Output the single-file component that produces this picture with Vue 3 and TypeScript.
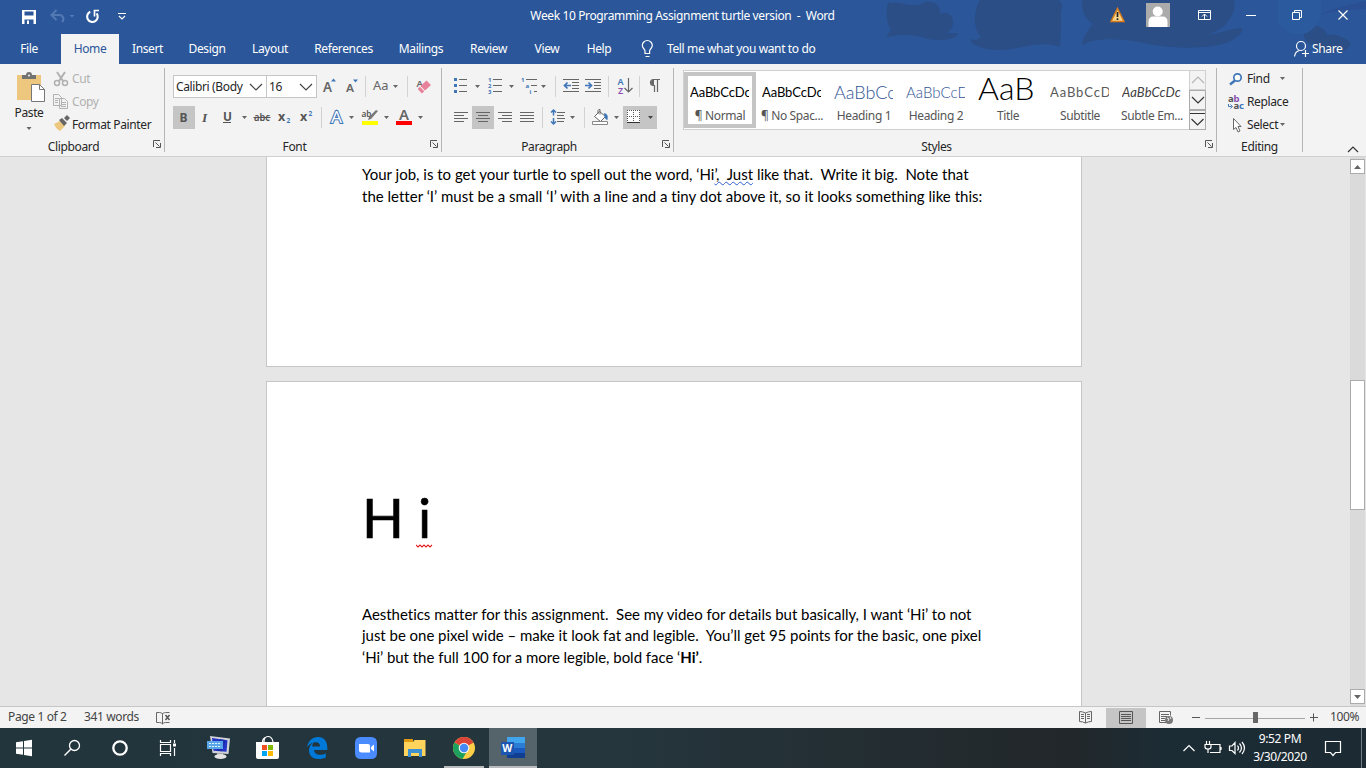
<script setup lang="ts">
interface Tab {
  label: string
  width: number
}

interface StyleItem {
  sample: string
  name: string
  kind: string
}

const tabs: Tab[] = [
  { label: 'File', width: 58 },
  { label: 'Home', width: 58 },
  { label: 'Insert', width: 57 },
  { label: 'Design', width: 62 },
  { label: 'Layout', width: 64 },
  { label: 'References', width: 83 },
  { label: 'Mailings', width: 72 },
  { label: 'Review', width: 63 },
  { label: 'View', width: 54 },
  { label: 'Help', width: 50 },
]

const styleItems: StyleItem[] = [
  { sample: 'AaBbCcDc', name: '¶ Normal', kind: 'normal' },
  { sample: 'AaBbCcDc', name: '¶ No Spac...', kind: 'nospace' },
  { sample: 'AaBbCc', name: 'Heading 1', kind: 'h1' },
  { sample: 'AaBbCcD', name: 'Heading 2', kind: 'h2' },
  { sample: 'AaB', name: 'Title', kind: 'title' },
  { sample: 'AaBbCcD', name: 'Subtitle', kind: 'subtitle' },
  { sample: 'AaBbCcDc', name: 'Subtle Em...', kind: 'subtle' },
]

// Each align icon: [x, width] of its four lines
const alignLines: Record<string, number[][]> = {
  left: [[454, 14], [454, 10], [454, 14], [454, 10]],
  center: [[476, 14], [478, 10], [476, 14], [478, 10]],
  right: [[498, 14], [502, 10], [498, 14], [502, 10]],
  justify: [[520, 14], [520, 14], [520, 14], [520, 14]],
}
</script>

<template>
  <div class="window">
    <header class="top">
      <svg class="art" width="500" height="64" viewBox="866 0 500 64">
        <g fill="#2a4e85">
          <path d="M889 3C903 0 912 10 925 2c12-2 16 6 15 12 9-3 14 2 13 10-1 6-4 7-6 9 5 1 9-1 11 1-3 6-18 7-30 5-12-4-28-6-42-1l5-9c-5-5-6-20-2-29z" />
          <path d="M980 0h78c3 2 6 5 3 11-1 3 1 9 0 18l-1 18c-10-4-22-3-33-1-16 4-36 6-47 1-8-3-10-6-9-8 5 2 8 0 10-2-8-8-8-25-1-37z" />
          <path d="M1082 0h152c2 8-1 17-10 26-4 4-12 7-16 9 12-2 25-7 34-7 2 3-4 10-13 14-20 7-50 7-75 3-22-5-55-10-72 0 1-9 7-16 11-21-10-7-11-14-11-24z" />
          <path d="M1305 29c8-6 20-3 22 6 9-2 17 3 23 7 2 6-6 10-15 10-14 2-20-2-25-8-6-4-8-10-5-15z" />
        </g>
        <path d="M1278 0h42c4 12-1 27-13 33-11 4-25-2-29-12z" fill="#2c5a9f" />
        <path d="M1320 14q20-8 46-13v8q-22 1-46 5z" fill="#2a5093" />
      </svg>

      <div class="titlebar">
        <svg width="140" height="32" viewBox="0 0 140 32">
          <path d="M22 10h14v14H22z" fill="#fff" />
          <path d="M24.500 11.500h9v4h-9zM24.500 19.500h9v4.500h-9z" fill="#2b579a" />
          <path d="M27 20.500h2V24h-2z" fill="#fff" />
          <path d="M56.500 10l-5 5 5 5M51.500 15h7.500a4 4 0 0 1 3 7" fill="none" stroke="#5379b5" stroke-width="2" />
          <path d="M69.500 15h5l-2.500 2.500z" fill="#5379b5" />
          <path d="M90.300 11.800a5.300 5.300 0 1 0 6.300 1.600" fill="none" stroke="#fff" stroke-width="2.100" />
          <path d="M94.500 16.500v-6.500M93.700 10.500h5.300" fill="none" stroke="#fff" stroke-width="1.700" />
          <path d="M118 13.500h8M119 16l3 3 3-3" fill="none" stroke="#fff" stroke-width="1.200" />
        </svg>
        <div class="caption">Week 10 Programming Assignment turtle version&nbsp; -&nbsp; Word</div>
        <svg width="266" height="32" viewBox="1100 0 266 32">
          <path d="M1117.500 8.500l6.500 13h-13z" fill="#f8d58c" stroke="#d87b1c" stroke-width="1.500" />
          <path d="M1117.500 12v5M1117.500 18.300v1.700" stroke="#222" stroke-width="1.700" />
          <path d="M1146 3h24v24h-24z" fill="#ababab" />
          <circle cx="1157.700" cy="11.500" r="5" fill="#fff" />
          <path d="M1148.500 27v-5q0-5.500 5-5.500h9q5 0 5 5.500v5z" fill="#fff" />
          <g fill="none" stroke="#fff">
            <path d="M1198.500 10.500h12v9h-12zM1198.500 12.500h12M1204.500 19v-5M1202 16.500l2.500-2.500 2.500 2.500" />
            <path d="M1246 15.500h10" />
            <path d="M1292.500 12.500h7v7h-7zM1294.500 12v-1.500h7v7h-1.500" />
            <path d="M1338.500 10.500l9 9M1347.500 10.500l-9 9" stroke-width="1.200" />
          </g>
        </svg>
      </div>

      <nav class="tabs">
        <div
          v-for="tab in tabs"
          :key="tab.label"
          class="tab"
          :class="{ 'tab--active': tab.label === 'Home', 'tab--file': tab.label === 'File' }"
          :style="{ width: tab.width + 'px' }"
        >{{ tab.label }}</div>
        <svg width="42" height="30" viewBox="624 34 42 30">
          <path d="M645 53.500v-2.500c0-2-2.700-2.700-2.700-5.500a5 5 0 0 1 10 0c0 2.800-2.700 3.500-2.700 5.500v2.500zM645.500 56.500h4" fill="none" stroke="#fff" stroke-width="1.200" />
        </svg>
        <div class="tellme">Tell me what you want to do</div>
        <div class="share">
          <svg width="18" height="18" viewBox="1293 40 18 18">
            <circle cx="1301" cy="46" r="4.500" fill="none" stroke="#fff" stroke-width="1.200" />
            <path d="M1294.500 56.500c.5-3.500 2.500-5.500 5-6M1302 53.500h7M1305.500 50v7" fill="none" stroke="#fff" stroke-width="1.200" />
          </svg>
          <span>Share</span>
        </div>
      </nav>
    </header>

    <section class="ribbon">
      <div class="group group--clipboard">
        <div class="clip">
          <div class="paste">
            <svg width="32" height="34" viewBox="13 70 32 34">
              <path d="M17 75h24v25H17z" fill="#ecc77d" />
              <path d="M22 79v-4h4q0-3 3-3t3 3h4v4z" fill="#727272" />
              <circle cx="29" cy="75.500" r="1" fill="#f3f3f3" />
              <path d="M31.500 84.500h8l5 5v12h-13z" fill="#fff" stroke="#777" />
              <path d="M39.500 84.500v5h5" fill="none" stroke="#777" />
            </svg>
            <span>Paste</span>
            <svg width="8" height="6" viewBox="0 0 8 6"><path d="M1.500 1h5L4 4z" fill="#666" /></svg>
          </div>
          <div class="clip__list">
            <div class="row row--off">
              <svg width="19" height="20" viewBox="53 68 19 20">
                <path d="M57 71l6 9M65 71l-6 9" stroke="#b1b1b1" stroke-width="2" />
                <g fill="none" stroke="#b1b1b1" stroke-width="1.500"><circle cx="57" cy="82" r="2.500" /><circle cx="65" cy="82" r="2.500" /></g>
              </svg>
              <span>Cut</span>
            </div>
            <div class="row row--off">
              <svg width="19" height="20" viewBox="53 92 19 20">
                <path d="M53.500 94.500h5l3 3v8h-8zM59.500 98.500h5l3 3v7h-8z" fill="#f3f3f3" stroke="#b1b1b1" />
                <path d="M55 98.500h4M55 100.500h3M55 102.500h3M61 102.500h5M61 104.500h5M61 106.500h5" stroke="#b1b1b1" />
              </svg>
              <span>Copy</span>
            </div>
            <div class="row">
              <svg width="19" height="20" viewBox="53 115 19 20">
                <path d="M54 124l6-3 5 5-5 5q-4-2-6-7z" fill="#ecc77d" />
                <path d="M59 120l3-2 5 5-3 3zM64 118l3-3 3 3-3 3z" fill="#666" />
              </svg>
              <span>Format Painter</span>
            </div>
          </div>
        </div>
        <div class="group__foot"><span>Clipboard</span></div>
        <svg class="launcher" width="10" height="10" viewBox="0 0 10 10"><path d="M1.500 8V1.500H8M3.500 3.500l4 4M8.500 4v4.500H4" fill="none" stroke="#555" /></svg>
      </div>

      <div class="group group--font">
        <div class="tools tools--top">
          <div class="combo combo--name"><span>Calibri (Body</span><svg width="14" height="8" viewBox="0 0 14 8"><path d="M1 1l6 6 6-6" fill="none" stroke="#444" stroke-width="1.200" /></svg></div>
          <div class="combo combo--size"><span>16</span><svg width="14" height="8" viewBox="0 0 14 8"><path d="M1 1l6 6 6-6" fill="none" stroke="#444" stroke-width="1.200" /></svg></div>
          <svg width="124" height="23" viewBox="317 75 124 23">
            <g class="glyph" fill="#666">
              <text x="323" y="92" font-size="14" font-weight="600" textLength="9" lengthAdjust="spacingAndGlyphs">A</text>
              <text x="346" y="92" font-size="11.500" font-weight="600" textLength="8" lengthAdjust="spacingAndGlyphs">A</text>
              <text x="373" y="90" font-size="12.500" textLength="15.500" lengthAdjust="spacingAndGlyphs">Aa</text>
              <text x="416.500" y="87" font-size="9.500" font-weight="600">A</text>
            </g>
            <path d="M331 81.500h5l-2.500-3zM353 79.500h5l-2.500 3z" fill="#3e76b8" />
            <path d="M393 85h5l-2.500 3z" fill="#666" />
            <path d="M365.500 76v21M407.500 76v21" stroke="#d2d2d2" />
            <path d="M426.500 80.500l4.500 4.500-6 5.500-4.500-4.500zM419.800 86.700l4.500 4.500-2.500 2.300-4-4.500z" fill="#e8819a" />
          </svg>
        </div>
        <div class="tools tools--bottom">
          <svg width="268" height="23" viewBox="173 106 268 23">
            <path d="M173 106h22v23h-22z" fill="#c5c5c5" />
            <g class="glyph" fill="#555">
              <text x="179.500" y="121.500" font-size="12" font-weight="700" textLength="8" lengthAdjust="spacingAndGlyphs">B</text>
              <text x="202" y="121.500" class="serif" font-size="13.500" font-weight="700" font-style="italic">I</text>
              <text x="223" y="121" font-size="12" font-weight="700" textLength="9" lengthAdjust="spacingAndGlyphs">U</text>
              <text x="254" y="121" font-size="10.500" font-weight="600" textLength="16" lengthAdjust="spacingAndGlyphs">abc</text>
              <text x="278" y="121" font-size="12.500" font-weight="700" textLength="8">x</text>
              <text x="300" y="121" font-size="12.500" font-weight="700" textLength="8">x</text>
            </g>
            <g class="glyph" fill="#3e76b8" font-weight="700" font-size="6.500"><text x="286.500" y="123">2</text><text x="308.500" y="116">2</text></g>
            <path d="M223 122.500h8M253.500 117.500h17" stroke="#555" />
            <path d="M321.500 107v21" stroke="#d2d2d2" />
            <text class="glyph outline" x="331" y="122.500" font-size="16" textLength="11" lengthAdjust="spacingAndGlyphs">A</text>
            <text class="glyph" x="361.500" y="116.500" font-size="9.500" font-weight="600" fill="#555" textLength="10" lengthAdjust="spacingAndGlyphs">ab</text>
            <path d="M368 120l1-3 7-7 2 1-7 8z" fill="#777" />
            <path d="M362 121h16v4h-16z" fill="#ff0" />
            <text class="glyph" x="399" y="120" font-size="13.500" font-weight="600" fill="#666" textLength="10" lengthAdjust="spacingAndGlyphs">A</text>
            <path d="M396 121h16v4h-16z" fill="#f00" />
            <path d="M242 116h5l-2.500 3zM349 116h5l-2.500 3zM384 116h5l-2.500 3zM418 116h5l-2.500 3z" fill="#666" />
          </svg>
        </div>
        <div class="group__foot"><span>Font</span></div>
        <svg class="launcher" width="10" height="10" viewBox="0 0 10 10"><path d="M1.500 8V1.500H8M3.500 3.500l4 4M8.500 4v4.500H4" fill="none" stroke="#555" /></svg>
      </div>

      <div class="group group--para">
        <div class="tools tools--top">
          <svg width="222" height="23" viewBox="450 75 222 23">
            <path d="M454 78h3v3h-3zM454 84h3v3h-3zM454 90h3v3h-3z" fill="#3e76b8" />
            <path d="M459 79.500h8M459 85.500h8M459 91.500h8M493 79.500h9M493 85.500h9M493 91.500h9M526 79.500h11M531 85.500h6M534 91.500h3" stroke="#666" />
            <g class="glyph" fill="#3e76b8" font-size="6" font-weight="700">
              <text x="488" y="82">1</text><text x="488" y="88">2</text><text x="488" y="94">3</text>
              <text x="521" y="82">1</text><text x="525.500" y="88">a</text><text x="529.500" y="94">i</text>
            </g>
            <path d="M475 85h5l-2.500 3zM509 85h5l-2.500 3zM541 85h5l-2.500 3z" fill="#666" />
            <path d="M555.500 76v21M608.500 76v21M639.500 76v21" stroke="#d2d2d2" />
            <path d="M563 79.500h16M572 82.500h7M572 85.500h7M572 88.500h7M563 91.500h16M585 79.500h16M594 82.500h7M594 85.500h7M594 88.500h7M585 91.500h16" stroke="#666" />
            <path d="M571 85.500h-6M567.500 82.500l-3 3 3 3M585 85.500h6M588.500 82.500l3 3-3 3" fill="none" stroke="#3e76b8" stroke-width="1.700" />
            <g class="glyph" font-size="9" font-weight="600"><text x="617.500" y="84.500" fill="#3e76b8">A</text><text x="618" y="93.500" fill="#8a4fb0">Z</text></g>
            <path d="M628.500 78v14M624.500 88l4 4 4-4" fill="none" stroke="#666" stroke-width="1.200" />
            <path d="M660 79.500h-6.500a3 3 0 0 0 0 6h1v6.500M657.500 79.500v12.500" fill="none" stroke="#666" stroke-width="1.200" />
            <path d="M654 79.500a3 3 0 0 0 0 6z" fill="#666" />
          </svg>
        </div>
        <div class="tools tools--bottom">
          <svg width="222" height="23" viewBox="450 106 222 23">
            <path d="M472 106h22v23h-22zM623 106h34v23h-34z" fill="#c5c5c5" />
            <g v-for="(lines, name) in alignLines" :key="name" fill="#666">
              <rect v-for="(l, i) in lines" :key="i" :x="l[0]" :y="112 + i * 3" :width="l[1]" height="1" />
            </g>
            <path d="M542.500 107v21M584.500 107v21" stroke="#d2d2d2" />
            <path d="M553.500 110v5.500M551 112.500l2.500-2.500 2.500 2.500M553.500 118v6M551 121.500l2.500 2.500 2.500-2.500" fill="none" stroke="#3e76b8" stroke-width="1.500" />
            <path d="M557 112.500h8M557 115.500h7M557 118.500h8M557 121.500h7" stroke="#666" />
            <path d="M570 116h5l-2.500 3zM614 116h5l-2.500 3z" fill="#666" /><path d="M648 116h5l-2.500 3z" fill="#444" />
            <path d="M594.500 116.500l5-5 6 5-5 5zM598 114v-3.500q0-1 2-1v5" fill="#fff" stroke="#666" />
            <path d="M604 113q5 1 3.500 7-3-1-3-4z" fill="#3e76b8" />
            <path d="M592.500 121.500h15v3h-15z" fill="#fff" stroke="#888" />
            <path d="M627 110h13v13h-13z" fill="#fff" />
            <path d="M627.500 110v12M633.500 110v12M639.500 110v12M627 110.500h13M627 116.500h13" stroke="#555" stroke-dasharray="1 1" />
            <path d="M627 122.500h13" stroke="#333" />
          </svg>
        </div>
        <div class="group__foot"><span>Paragraph</span></div>
        <svg class="launcher" width="10" height="10" viewBox="0 0 10 10"><path d="M1.500 8V1.500H8M3.500 3.500l4 4M8.500 4v4.500H4" fill="none" stroke="#555" /></svg>
      </div>

      <div class="group group--styles">
        <div class="gallery">
          <div v-for="item in styleItems" :key="item.kind" class="style" :class="{ 'style--on': item.kind === 'normal' }">
            <div class="style__sample" :class="'style__sample--' + item.kind">{{ item.sample }}</div>
            <div class="style__name">{{ item.name }}</div>
          </div>
          <div class="spinner">
            <div class="spin spin--off"><svg width="14" height="8" viewBox="0 0 14 8"><path d="M1 7l6-6 6 6" fill="none" stroke="#b5b5b5" stroke-width="1.200" /></svg></div>
            <div class="spin"><svg width="14" height="8" viewBox="0 0 14 8"><path d="M1 1l6 6 6-6" fill="none" stroke="#333" stroke-width="1.200" /></svg></div>
            <div class="spin"><svg width="15" height="14" viewBox="0 0 15 14"><path d="M0 .5h15M1.500 6l6 6 6-6" fill="none" stroke="#333" stroke-width="1.200" /></svg></div>
          </div>
        </div>
        <div class="group__foot"><span>Styles</span></div>
        <svg class="launcher" width="10" height="10" viewBox="0 0 10 10"><path d="M1.500 8V1.500H8M3.500 3.500l4 4M8.500 4v4.500H4" fill="none" stroke="#555" /></svg>
      </div>

      <div class="group group--edit">
        <div class="edit">
          <div class="row">
            <svg width="19" height="20" viewBox="1228 69 19 20">
              <circle cx="1237.500" cy="76.500" r="3.700" fill="#fff" stroke="#3e76b8" stroke-width="1.700" />
              <path d="M1235 79.500l-5 4" stroke="#3e76b8" stroke-width="2.500" />
            </svg>
            <span>Find</span>
            <svg class="find-arrow" width="6" height="4" viewBox="0 0 6 4"><path d="M0 0h5L2.500 3z" fill="#666" /></svg>
          </div>
          <div class="row">
            <svg width="19" height="20" viewBox="1228 92 19 20">
              <g class="glyph" font-size="9.500" font-weight="700">
                <text x="1228" y="101" fill="#555">a</text><text x="1233.500" y="101" fill="#8a4fb0">b</text>
                <text x="1233.500" y="108" fill="#555">a</text><text x="1239" y="108" fill="#3e76b8">c</text>
              </g>
              <path d="M1228.500 103v2.500h3M1230.500 103.500l2 2-2 2" fill="none" stroke="#3e76b8" />
            </svg>
            <span>Replace</span>
          </div>
          <div class="row">
            <svg width="19" height="20" viewBox="1228 115 19 20">
              <path d="M1233.500 117.500v11l2.500-2 2 4.500 2-1-2-4.500h3z" fill="#fff" stroke="#666" />
            </svg>
            <span>Select</span>
            <svg class="select-arrow" width="6" height="4" viewBox="0 0 6 4"><path d="M0 0h5L2.500 3z" fill="#666" /></svg>
          </div>
        </div>
        <div class="group__foot group__foot--edit"><span>Editing</span></div>
      </div>
      <div class="ribbon__end">
        <svg width="12" height="7" viewBox="0 0 12 7"><path d="M1 6l5-5 5 5" fill="none" stroke="#333" stroke-width="1.200" /></svg>
      </div>
    </section>

    <main class="canvas">
      <div class="pages">
        <article class="page page--first">
          <p class="l1">Your job, is to get your turtle to spell out the word, ‘Hi<span class="wavy">’,&nbsp; Just</span> like that.&nbsp; Write it big.&nbsp; Note that</p>
          <p class="l2">the letter ‘I’ must be a small ‘I’ with a line and a tiny dot above it, so it looks something like this:</p>
        </article>
        <article class="page page--second">
          <div class="big">
            <span>H</span>
            <span class="big__i">i<svg width="17" height="4" viewBox="0 0 17 4"><path d="M0 1l2 2 2-2 2 2 2-2 2 2 2-2 2 2 2-2" fill="none" stroke="#e02020" stroke-width="1.100" /></svg></span>
          </div>
          <p class="l3">Aesthetics matter for this assignment.&nbsp; See my video for details but basically, I want ‘Hi’ to not</p>
          <p class="l4">just be one pixel wide – make it look fat and legible.&nbsp; You’ll get 95 points for the basic, one pixel</p>
          <p class="l5">‘Hi’ but the full 100 for a more legible, bold face ‘<b>Hi’</b>.</p>
        </article>
      </div>
      <div class="scroll">
        <div class="scroll__btn"><svg width="7" height="4" viewBox="0 0 7 4"><path d="M0 4h7L3.500 0z" fill="#666" /></svg></div>
        <div class="scroll__thumb"></div>
        <div class="scroll__btn"><svg width="7" height="4" viewBox="0 0 7 4"><path d="M0 0h7L3.500 4z" fill="#666" /></svg></div>
      </div>
    </main>

    <footer class="status">
      <span class="status__page">Page 1 of 2</span>
      <span class="status__words">341 words</span>
      <svg width="16" height="14" viewBox="155 709 16 14">
        <path d="M162.500 711.500q-2-1-3-1h-3v10h3q2 0 3 1.500zM162.500 711.500q2-1 3-1h4M162.500 722q1-1.500 3-1.500h4" fill="none" stroke="#666" />
        <path d="M165.500 713l4 5M169.500 713l-4 5" stroke="#555" stroke-width="1.500" />
      </svg>
      <svg class="status__views" width="116" height="20" viewBox="1066 707 116 20">
        <path d="M1106 707h40v20h-40z" fill="#c5c5c5" />
        <path d="M1085.500 712q-3-1.500-6-1.500v10q3 0 6 1.500 3-1.500 6-1.500v-10q-3 0-6 1.500v10M1081 713.500h3M1081 715.500h3M1081 717.500h3M1087 713.500h3M1087 715.500h3M1087 717.500h3" fill="none" stroke="#666" />
        <path d="M1119.500 710.500h13v12h-13zM1121 713.500h10M1121 715.500h10M1121 717.500h10M1121 719.500h10" fill="none" stroke="#555" />
        <path d="M1166 721.500h-6.500v-11h11v4M1161 713.500h8M1161 715.500h6M1161 717.500h4M1161 719.500h4" fill="none" stroke="#666" />
        <circle cx="1169" cy="719" r="4" fill="#777" /><path d="M1167 717l2 1-1 2M1170 716l1 2" fill="none" stroke="#eee" />
      </svg>
      <svg width="148" height="20" viewBox="1182 707 148 20">
        <path d="M1192 716.500h8M1310 716.500h8M1313.500 712.500v8" stroke="#555" />
        <path d="M1205 717.500h100" stroke="#a6a6a6" />
        <path d="M1253 711h5v11h-5z" fill="#666" />
      </svg>
      <span class="status__zoom">100%</span>
    </footer>

    <div class="taskbar">
      <svg width="489" height="40" viewBox="0 728 489 40">
        <path d="M16 742.200l7-1v6.300h-7zM24 741l8-1.200v7.700h-8zM16 748.500h7v6.300l-7-1zM24 748.500h8v7.700l-8-1.200z" fill="#fff" />
        <circle cx="74.500" cy="745.500" r="5" fill="none" stroke="#fff" stroke-width="1.300" />
        <path d="M71 749l-6.500 6.500" stroke="#fff" stroke-width="1.400" />
        <circle cx="120" cy="748" r="6.700" fill="none" stroke="#fff" stroke-width="2.300" />
        <path d="M160.500 740v2.500h10V740M160.500 744.500h10v7h-10zM160.500 756v-2.500h10V756M174.500 740v3M174.500 748v8" fill="none" stroke="#fff" stroke-width="1.200" />
        <path d="M173 743.500h3v3h-3z" fill="#fff" />
        <path d="M210 736l20 2.500-1.500 15.500-16-1z" fill="#cfd3d8" /><path d="M212 738l15.500 2.300-1 11.500-13-1z" fill="#2434c8" />
        <path d="M220 739l6 1.300-4 11-5-.5z" fill="#1526a0" opacity=".6" />
        <path d="M207 741h16v8h-16z" fill="#58a6e8" /><path d="M209 743.500h12M209 746.500h12" stroke="#dff0ff" stroke-dasharray="2 1" />
        <path d="M217 753h6v3h-6z" fill="#aaa" /><ellipse cx="220.500" cy="756.500" rx="6" ry="2.500" fill="#e3e3e3" />
        <path d="M256 742h23v15q0 2-2 2h-19q-2 0-2-2z" fill="#fff" />
        <path d="M264 742q0-5.500 4-5.500t5 5.500M262.500 742q0-4 4-5" fill="none" stroke="#fff" stroke-width="1.200" />
        <path d="M262 745h5v5h-5z" fill="#f25022" /><path d="M268 745h5v5h-5z" fill="#7fba00" /><path d="M262 751h5v5h-5z" fill="#00a4ef" /><path d="M268 751h5v5h-5z" fill="#ffb900" />
        <path d="M307 747c1.500-6.500 5.500-10 11-10 6.500 0 9.300 5 9.300 10.500v2.500h-13.300c.5 5.500 7.500 6 11.800 3.200v4.300c-7 3-16.800 1.800-16.800-7 0-4 2-6.700 5-8.200-1.300 1.500-1.700 2.500-1.900 4.200h8c.3-5.500-8.600-6-13.100.5z" fill="#0078d7" />
        <path d="M361 737h10q6 0 6 6v10q0 6-6 6h-10q-6 0-6-6v-10q0-6 6-6z" fill="#4a8cff" />
        <path d="M359 744h9q2 0 2 2v6.500h-8.500q-2.500 0-2.500-2zM371 747l3-2.500v7l-3-2.500z" fill="#fff" />
        <path d="M404 739h9v4h-9z" fill="#e09b12" /><path d="M404 742h9l1.500-2h11v16H404z" fill="#ffd35c" /><path d="M408 749h14v8h-3v-4h-8v4h-3z" fill="#3c8fd0" />
        <circle cx="464" cy="748" r="11" fill="#ffcf48" />
        <path d="M464 748l-9.500-5.500a11 11 0 0 1 19 0z" fill="#dc4437" />
        <path d="M454.500 742.500a11 11 0 0 0 8 16.400l5-8.400z" fill="#1ba05e" />
        <circle cx="464" cy="748" r="5.300" fill="#f3f3f3" /><circle cx="464" cy="748" r="4.200" fill="#4688f4" />
        <path d="M444 766h40v2h-40z" fill="#b9bbbc" />
      </svg>
      <div class="task-word">
        <svg width="48" height="38" viewBox="489 728 48 38">
          <path d="M507 737h18v6h-18z" fill="#41a5ee" /><path d="M507 743h18v5h-18z" fill="#2b7cd3" /><path d="M507 748h18v5h-18z" fill="#185abd" /><path d="M507 753h18v5h-18z" fill="#103f91" />
          <path d="M501 742h13v13h-13z" fill="#1d56b0" />
          <text class="glyph" x="502.300" y="752" font-size="10" font-weight="700" fill="#fff" textLength="10" lengthAdjust="spacingAndGlyphs">W</text>
        </svg>
      </div>
      <svg class="tray" width="68" height="40" viewBox="1180 728 68 40">
        <g fill="none" stroke="#fff" stroke-width="1.200">
          <path d="M1183.500 751l5.500-5.500 5.500 5.500" />
          <path d="M1211 744.500h9v8h-10M1221 747v3M1206.500 741v3M1209.500 741v3M1205 744.500h6v2.500q0 2-3 2t-3-2zM1208 749v4" />
          <path d="M1229.500 746v4.500h2.500l3 3v-11l-3 3.500zM1237.500 745.500q2 2.500 0 5M1239.500 743.500q4 4.500 0 9M1242 742q5 6 0 12" />
        </g>
      </svg>
      <div class="clock">
        <span class="clock__time">9:52 PM</span>
        <span class="clock__date">3/30/2020</span>
      </div>
      <svg width="54" height="40" viewBox="1312 728 54 40">
        <path d="M1325.500 741.500h15v11h-5l-2.500 3-2.500-3h-5z" fill="none" stroke="#fff" stroke-width="1.200" />
        <path d="M1361.500 728v40" stroke="#6f7b80" />
      </svg>
    </div>
  </div>
</template>

<style>
html,
body {
  margin: 0;
  overflow: hidden;
}
</style>

<style scoped>
.window {
  width: 1366px;
  height: 768px;
  display: flex;
  flex-direction: column;
  overflow: hidden;
  font-family: 'Noto Sans', 'Open Sans', sans-serif;
  font-size: 12px;
  letter-spacing: -0.37px;
  font-variant-ligatures: none;
  color: #262626;
  background: #e6e6e6;
}
svg { display: block; flex: none; }
.glyph { font-family: 'Noto Sans', sans-serif; letter-spacing: 0; }
.serif { font-family: 'Liberation Serif', serif; }
.outline { fill: #fff; stroke: #3e76b8; stroke-width: 2px; paint-order: stroke; }

/* title bar and tabs */
.top {
  position: relative;
  height: 64px;
  flex: none;
  background: #2b579a;
  color: #fff;
}
.art { position: absolute; right: 0; top: 0; }
.titlebar { position: relative; display: flex; height: 34px; }
.caption { width: 960px; line-height: 31px; text-align: center; text-indent: 125px; white-space: nowrap; }
.tabs { position: relative; display: flex; height: 30px; line-height: 30px; }
.tab { text-align: center; }
.tab--file { margin-right: 3px; }
.tab--active { background: #f3f3f3; color: #2b579a; }
.tellme { width: 626px; padding-left: 1px; }
.share { display: flex; gap: 1px; }
.share svg { margin-top: 6px; }

/* ribbon */
.ribbon {
  display: flex;
  height: 92px;
  flex: none;
  background: #f3f3f3;
  border-bottom: 1px solid #d0d0d0;
}
.group {
  position: relative;
  box-sizing: border-box;
  height: 84px;
  margin-top: 4px;
  border-right: 1px solid #b5b5b5;
  display: flex;
  flex-direction: column;
}
.group--clipboard { width: 165px; }
.group--font { width: 277px; padding-left: 8px; }
.group--para { width: 232px; padding-left: 8px; }
.group--styles { width: 543px; padding-left: 9px; }
.group--edit { width: 86px; }
.group__foot { margin: auto 0 -3px; height: 16px; line-height: 16px; text-align: center; padding-right: 17px; }
.group--font .group__foot,
.group--para .group__foot { padding-right: 25px; }
.group--styles .group__foot { padding-right: 26px; }
.group .group__foot--edit { padding-right: 0; }
.launcher { position: absolute; right: 2px; bottom: 3px; }
.clip { display: flex; }
.paste { width: 53px; display: flex; flex-direction: column; align-items: center; padding-left: 5px; box-sizing: border-box; padding-top: 2px; }
.paste span { line-height: 18px; }
.paste svg:last-child { margin-top: 4px; }
.row { display: flex; height: 23px; align-items: center; white-space: nowrap; }
.row span { margin-top: -3px; }
.row--off { color: #b1b1b1; }
.clip__list .row svg { margin-top: -1px; }
.tools { display: flex; }
.tools--top { margin-top: 7px; height: 24px; }
.tools--bottom { margin-top: 7px; height: 23px; }
.combo {
  box-sizing: border-box;
  height: 23px;
  border: 1px solid #c6c6c6;
  background: #fff;
  display: flex;
  align-items: center;
  justify-content: space-between;
  padding: 0 3px 0 2px;
  white-space: nowrap;
}
.combo--name { width: 94px; }
.combo--size { width: 51px; margin-left: -1px; }
.gallery {
  box-sizing: border-box;
  width: 523px;
  height: 60px;
  margin-top: 2px;
  border: 1px solid #d0d0d0;
  background: #fff;
  display: flex;
}
.style { width: 72px; flex: none; box-sizing: border-box; height: 56px; margin-top: 1px; padding: 4px 7px 0 6px; display: flex; flex-direction: column; }
.style--on { box-shadow: inset 0 0 0 4px #c5c5c5; }
.style__sample {
  height: 26px;
  line-height: 32px;
  overflow: hidden;
  white-space: nowrap;
  color: #000;
  font-family: Lato, sans-serif;
  font-size: 13px;
  letter-spacing: -0.1px;
}
.style__sample--h1 { font-size: 18px; font-weight: 300; color: #2f5496; letter-spacing: 0; }
.style__sample--h2 { font-size: 15px; font-weight: 300; color: #2f5496; letter-spacing: 0; }
.style__sample--title { font-size: 32px; font-weight: 300; line-height: 24px; letter-spacing: 0; }
.style__sample--subtitle { color: #5a5a5a; letter-spacing: 0.9px; }
.style__sample--subtle { color: #404040; font-style: italic; letter-spacing: 0.1px; }
.style__name { line-height: 16px; margin: 6px -6px 0 -5px; text-align: center; color: #555; white-space: nowrap; }
.spinner { width: 17px; margin: -1px -1px -1px auto; display: flex; flex-direction: column; }
.spin { box-sizing: border-box; height: 20px; border: 1px solid #ababab; background: #f3f3f3; display: flex; align-items: center; justify-content: center; }
.spin--off { border-color: #d0d0d0; }
.edit { padding-left: 11px; }
.edit .row svg:first-child { margin-top: 1px; }
.edit .row svg:last-child { margin-top: -2px; }
.find-arrow { margin-left: 10px; }
.select-arrow { margin-left: 2px; }
.ribbon__end { flex: 1; display: flex; justify-content: flex-end; align-items: flex-end; padding: 0 7px 3px 0; }

/* document */
.canvas { flex: 1; min-height: 0; display: flex; overflow: hidden; }
.pages { width: 1350px; padding-left: 266px; box-sizing: border-box; }
.page {
  width: 816px;
  box-sizing: border-box;
  background: #fff;
  border: 1px solid #c6c6c6;
  padding-left: 95px;
  color: #000;
  font-family: Lato, sans-serif;
  font-size: 15px;
  letter-spacing: 0;
}
.page p { margin: 0; height: 21.5px; line-height: 21.5px; white-space: nowrap; }
.page--first { height: 210px; border-top: 0; padding-top: 7px; }
.page--second { height: 340px; margin-top: 14px; }
.l2 { letter-spacing: 0.01px; }
.l3, .l4, .l5 { letter-spacing: -0.03px; }
.wavy { text-decoration: underline wavy #2f5fd0 1px; text-underline-offset: 1px; text-decoration-skip-ink: none; }
.big { height: 221.5px; padding-top: 104px; box-sizing: border-box; display: flex; font-size: 55px; line-height: 62px; -webkit-text-stroke: 0.6px #000; }
.big__i { margin-left: 12px; display: flex; flex-direction: column; align-items: center; }
.big__i svg { margin-top: -4px; }
.scroll { width: 16px; display: flex; flex-direction: column; padding-top: 2px; box-sizing: border-box; background: linear-gradient(#dadada, #dadada) 0 0 / 15px 100% no-repeat; }
.scroll__btn { box-sizing: border-box; width: 15px; height: 15px; background: #fff; border: 1px solid #ababab; display: flex; align-items: center; justify-content: center; }
.scroll__thumb { box-sizing: border-box; width: 15px; height: 130px; margin: 206px 0 179px; background: #fff; border: 1px solid #ababab; }

/* status bar */
.status {
  height: 21px;
  flex: none;
  display: flex;
  align-items: center;
  border-top: 1px solid #c6c6c6;
  background: #f3f3f3;
  color: #444;
}
.status span { margin-top: -3px; }
.status__page { width: 76px; padding-left: 8px; }
.status__words { width: 71px; }
.status__views { margin-left: auto; }
.status__zoom { width: 36px; white-space: nowrap; }

/* taskbar */
.taskbar { height: 40px; flex: none; display: flex; background: linear-gradient(90deg, #22343c, #25363d 45%, #22272a 78%, #1c2c34 85%, #1c2b33); color: #fff; }
.task-word { width: 48px; height: 38px; background: #55636a; border-bottom: 2px solid #b9bbbc; }
.tray { margin-left: auto; }
.clock { width: 64px; display: flex; flex-direction: column; align-items: center; padding-top: 2px; line-height: 18px; }
</style>
